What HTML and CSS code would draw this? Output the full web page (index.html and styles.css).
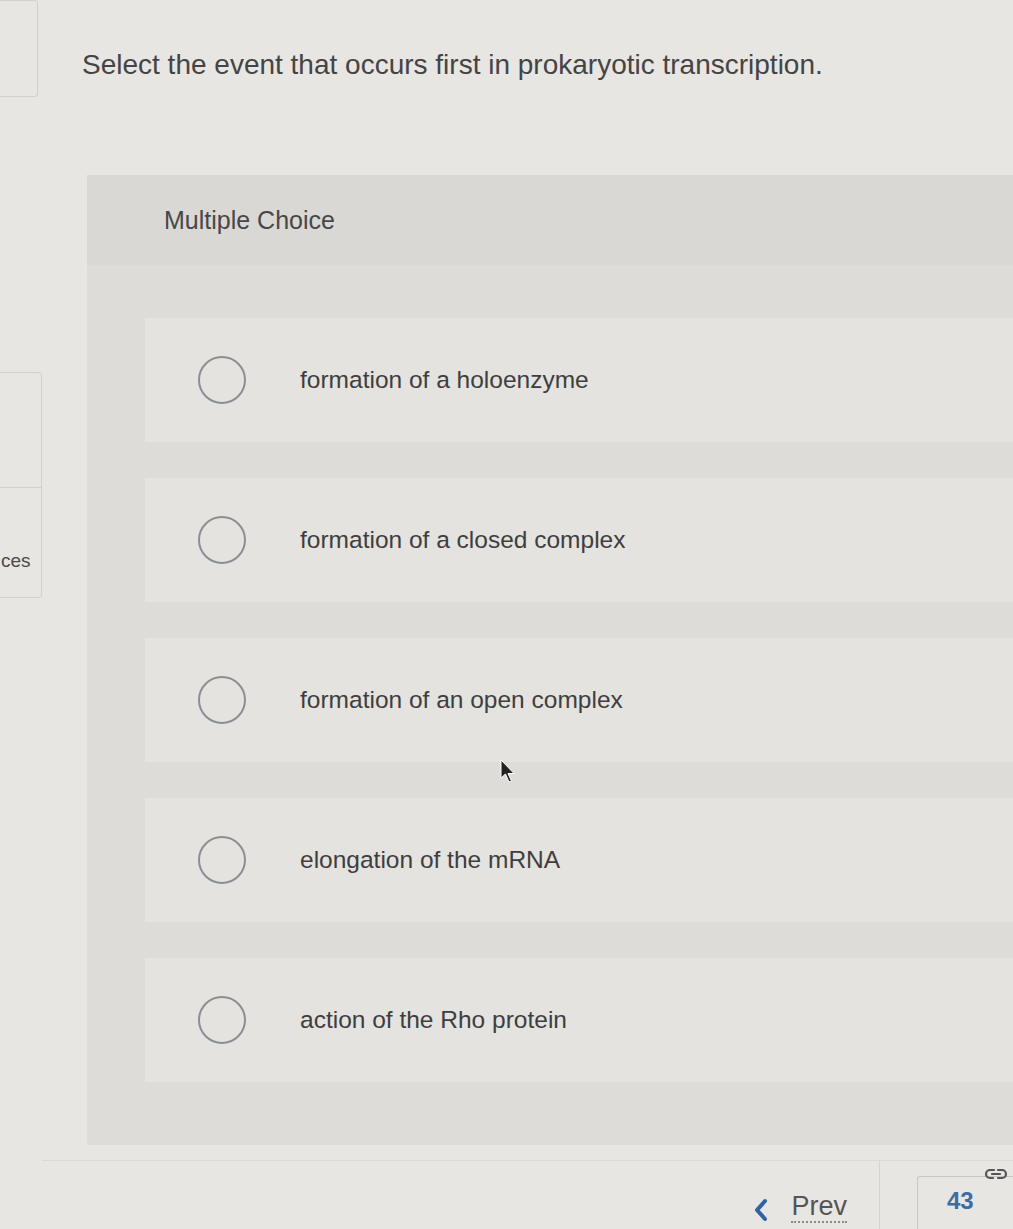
FILE: index.html
```html
<!DOCTYPE html>
<html lang="en">
<head>
    <meta charset="UTF-8">
    <meta name="viewport" content="width=device-width, initial-scale=1.0">
    <title>Multiple Choice</title>
    <link rel="stylesheet" href="styles.css">
</head>
<body>
    <div class="page">
        <div class="side">
            <div class="side-box top-box"></div>
            <div class="side-box res-box">
                <div class="res-top"></div>
                <div class="res-label">ces</div>
            </div>
        </div>

        <div class="main">
            <h1 class="question">Select the event that occurs first in prokaryotic transcription.</h1>

            <div class="panel">
                <div class="panel-head">Multiple Choice</div>
                <div class="panel-body">
                    <label class="option"><span class="radio"></span><span class="opt-text">formation of a holoenzyme</span></label>
                    <label class="option"><span class="radio"></span><span class="opt-text">formation of a closed complex</span></label>
                    <label class="option"><span class="radio"></span><span class="opt-text">formation of an open complex</span></label>
                    <label class="option"><span class="radio"></span><span class="opt-text">elongation of the mRNA</span></label>
                    <label class="option"><span class="radio"></span><span class="opt-text">action of the Rho protein</span></label>
                </div>
            </div>

            <div class="nav">
                <div class="prev">
                    <svg class="chev" width="16" height="24" viewBox="0 0 16 24"><path d="M12 3 L4 12 L12 21" fill="none" stroke="#2f62a8" stroke-width="4" stroke-linecap="round" stroke-linejoin="round"/></svg>
                    <span class="prev-text">Prev</span>
                </div>
                <div class="page-box">
                    <span class="page-num">43</span>
                    <svg class="link" width="26" height="16" viewBox="0 0 26 16"><path d="M11 4 H7 a4 4 0 0 0 0 8 H10 M15 4 H19 a4 4 0 0 1 0 8 H15 M9 8 H17" fill="none" stroke="#555" stroke-width="2.2" stroke-linecap="round"/></svg>
                </div>
            </div>
        </div>
    </div>

    <svg class="cursor" width="20" height="28" viewBox="0 0 20 28"><path d="M3 2 L3 20 L7.5 16 L11 24 L13.5 23 L10 15.5 L16 15.5 Z" fill="#222" stroke="#fff" stroke-width="1"/></svg>
</body>
</html>
```

FILE: styles.css
```css
body {
    margin: 0;
    background-color: #e8e6e3;
    font-family: "Liberation Sans", Arial, sans-serif;
    color: #454545;
    overflow: hidden;
}

.page {
    display: flex;
    min-height: 1229px;
    position: relative;
}

/* left rail, mostly cut off */
.side {
    width: 42px;
    flex-shrink: 0;
}

.side-box {
    border: 1px solid #d2d0cc;
    border-left: none;
    border-radius: 0 4px 4px 0;
}

.top-box {
    height: 95px;
    width: 37px;
}

.res-box {
    margin-top: 275px;
    height: 224px;
    width: 41px;
    display: flex;
    flex-direction: column;
}

.res-top {
    height: 114px;
    border-bottom: 1px solid #d2d0cc;
}

.res-label {
    padding: 62px 0 0 1px;
    font-size: 19px;
    color: #4a4a4a;
}

.main {
    flex: 1;
    display: flex;
    flex-direction: column;
}

.question {
    margin: 48px 0 0 40px;
    font-size: 28px;
    font-weight: normal;
    color: #444;
    line-height: 34px;
}

.panel {
    margin: 93px 0 0 45px;
    background-color: #dedcd9;
}

.panel-head {
    height: 90px;
    display: flex;
    align-items: center;
    padding-left: 77px;
    font-size: 25px;
    color: #474747;
    background-color: #dad8d5;
}

.panel-body {
    display: flex;
    flex-direction: column;
    gap: 36px;
    padding: 53px 0 63px 58px;
}

.option {
    height: 124px;
    display: flex;
    align-items: center;
    padding-left: 53px;
    background-color: #e5e3e0;
    cursor: pointer;
}

.radio {
    width: 44px;
    height: 44px;
    border: 2px solid #8b8e93;
    border-radius: 50%;
    flex-shrink: 0;
}

.opt-text {
    margin-left: 54px;
    font-size: 24.5px;
    color: #3e3e3e;
}

.nav {
    flex: 1;
    display: flex;
    justify-content: flex-end;
    margin-top: 15px;
    border-top: 1px solid #dcdad7;
}

.prev {
    display: flex;
    align-items: flex-start;
    gap: 22px;
    padding: 30px 32px 0 0;
    border-right: 1px solid #d6d4d1;
    align-self: stretch;
}

.chev {
    margin-top: 7px;
}

.prev-text {
    font-size: 27px;
    color: #555;
    border-bottom: 2px dotted #8a8a8a;
    line-height: 30px;
}

.page-box {
    position: relative;
    margin: 15px 0 0 37px;
    width: 96px;
    height: 70px;
    border: 1px solid #c9c7c4;
    border-right: none;
    border-radius: 3px 0 0 0;
    padding: 10px 0 0 29px;
    box-sizing: border-box;
}

.page-num {
    font-size: 24px;
    font-weight: bold;
    color: #3b6ca6;
}

.link {
    position: absolute;
    top: -11px;
    right: 4px;
}

.cursor {
    position: absolute;
    left: 498px;
    top: 758px;
}
```
